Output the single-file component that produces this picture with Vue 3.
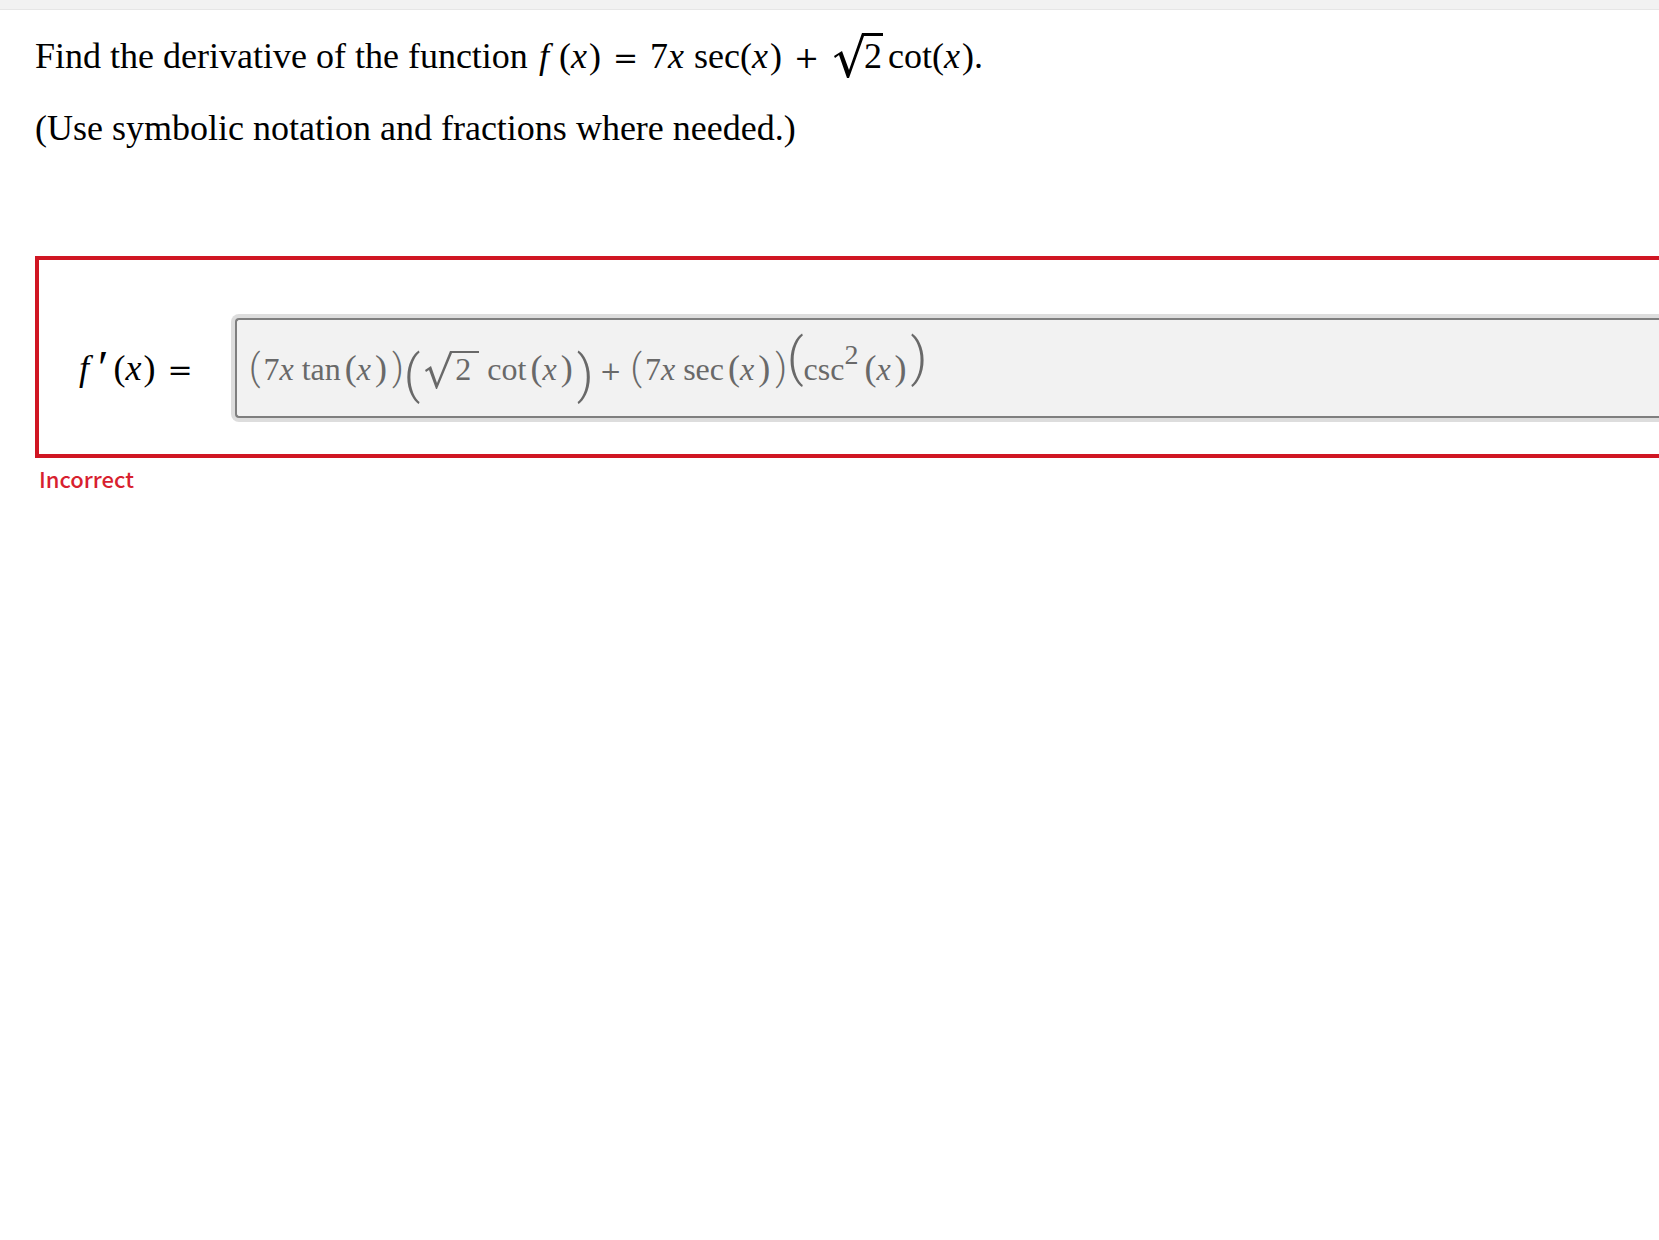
<script setup>
const answerLabel = 'Derivative answer'
</script>

<template>
  <div class="page">
    <header class="strip"></header>
    <main class="question">
      <p class="prompt">
        Find the derivative of the function
        <span class="math" role="math"><i class="fn">f</i><span>(</span><i>x</i><span>)</span><span class="op eq">=</span><span>7</span><i>x</i><span class="name">sec</span><span>(</span><i>x</i><span>)</span><span class="op plus">+</span><span class="root"><svg class="radical" viewBox="0 0 50 46" aria-hidden="true"><path d="M0 23L8 18L15 37L28 0H49V3H30L15 45H13L5 22L1 25Z" /></svg>2</span><span class="factor">cot</span><span>(</span><i>x</i><span>)</span><span>.</span></span>
      </p>
      <p class="prompt">(Use symbolic notation and fractions where needed.)</p>

      <section class="answer">
        <div id="answer-label" class="lhs"><i>f</i><i class="prime">′</i><span>(</span><i>x</i><span>)</span><span class="op eq">=</span></div>
        <div class="field" role="textbox" aria-readonly="true" aria-labelledby="answer-label" :title="answerLabel">
          <span class="mid start">(</span><span>7</span><i>x</i><span class="name">tan</span><span class="open">(</span><i>x</i><span class="close">)</span><span class="mid end">)</span><span class="big low">(</span><span class="root small"><svg class="radical" viewBox="0 0 54 38" aria-hidden="true"><path d="M0 19L6 15L12 32L25 0H54V2H27L12 38H11L4 19L1 21Z" /></svg>2</span><span class="name">cot</span><span class="open">(</span><i>x</i><span class="close">)</span><span class="big low end">)</span><span class="op sum">+</span><span class="mid start">(</span><span>7</span><i>x</i><span class="name">sec</span><span class="open">(</span><i>x</i><span class="close">)</span><span class="mid end">)</span><span class="big high">(</span><span>csc</span><span class="power">2</span><span class="open">(</span><i>x</i><span class="close">)</span><span class="big high end">)</span>
        </div>
      </section>
      <p class="status" role="status">Incorrect</p>
    </main>
  </div>
</template>

<style>
body {
  margin: 0;
  background: #fff;
}
</style>

<style scoped>
.page {
  min-height: 100vh;
  overflow-x: hidden;
  color: #000;
  font-family: "Liberation Serif", "Times New Roman", serif;
  font-size: 36px;
}
.strip {
  height: 9px;
  background: #f2f2f2;
  border-bottom: 1px solid #e6e6e6;
}
.question {
  padding: 22px 0 0 35px;
}
.prompt {
  margin: 0 0 24px;
  line-height: 48px;
  white-space: nowrap;
}
.math {
  margin-left: 2px;
}
.math i,
.lhs i {
  margin-right: 2px;
}
.math .fn {
  margin-right: 10px;
}
.op {
  font-family: "DejaVu Serif", serif;
  font-size: 30px;
  line-height: 1px;
}
.eq {
  margin: 0 12px;
}
.plus {
  margin: 0 15px 0 12px;
}
.name {
  margin-left: 8px;
}
.factor {
  margin-left: 6px;
}
.root {
  position: relative;
  display: inline-block;
  padding-left: 30px;
  line-height: 1;
}
.radical {
  position: absolute;
  left: 0;
  top: -5px;
  width: 50px;
  height: 46px;
}
.radical path {
  fill: currentColor;
}
.answer {
  display: flex;
  align-items: center;
  margin-top: 104px;
  padding-top: 22px;
  height: 172px;
  border: 4px solid #d01623;
  border-right: 0;
  white-space: nowrap;
}
.lhs {
  width: 156px;
  padding-left: 40px;
}
.lhs .prime {
  margin: 0 8px 0 4px;
  font-size: 48px;
  line-height: 1px;
  vertical-align: -4px;
}
.field {
  flex: 1;
  height: 96px;
  line-height: 98px;
  padding-left: 12px;
  border: 2px solid #7f7f7f;
  border-right: 0;
  border-radius: 4px 0 0 4px;
  box-shadow: 0 0 0 4px #ddd;
  background: #f2f2f2;
  color: #696969;
  font-size: 32px;
}
.open,
.close {
  margin-left: 4px;
  font-size: 36px;
  line-height: 1px;
}
.mid,
.big {
  font-family: Roboto, sans-serif;
  font-weight: 300;
  line-height: 1px;
}
.mid {
  font-size: 36px;
}
.start {
  margin-right: 3px;
}
.mid.end {
  margin-left: 5px;
}
.big {
  font-size: 52px;
}
.big.end {
  margin-left: 4px;
}
.low {
  vertical-align: -12px;
}
.high {
  vertical-align: 5px;
}
.small {
  margin-left: 5px;
  padding-right: 8px;
}
.small .radical {
  top: -2px;
  width: 54px;
  height: 38px;
}
.sum {
  font-size: 26px;
  margin: 0 9px 0 6px;
}
.power {
  margin-right: 2px;
  font-size: 28px;
  line-height: 1px;
  vertical-align: 16px;
}
.status {
  margin: 4px 0 0 4px;
  color: #d81f2f;
  font-family: "Noto Sans CJK SC", sans-serif;
  font-size: 22px;
  font-weight: 500;
  line-height: 32px;
}
</style>
